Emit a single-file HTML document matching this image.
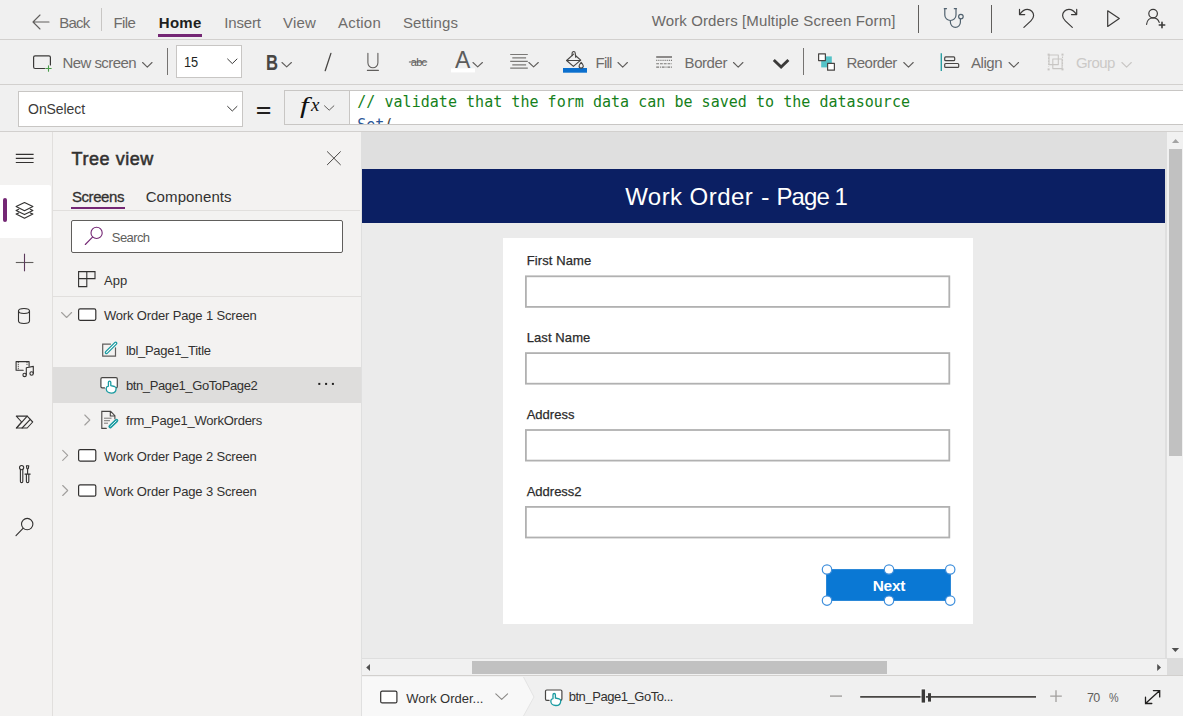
<!DOCTYPE html>
<html lang="en">
<head>
<meta charset="utf-8">
<title>Work Orders [Multiple Screen Form] - Power Apps</title>
<style>
*{box-sizing:border-box;margin:0;padding:0}
html,body{width:1183px;height:716px;overflow:hidden;background:#f3f2f1;font-family:"Liberation Sans",sans-serif}
#app{position:relative;width:1183px;height:716px;overflow:hidden;background:#f3f2f1}
.a{position:absolute}
.t{position:absolute;white-space:nowrap;display:block}
svg{position:absolute;overflow:visible}
.s{fill:none;stroke:#323130;stroke-width:1.1;stroke-linecap:round;stroke-linejoin:round}
.chev{fill:none;stroke:#605e5c;stroke-width:1.1;stroke-linecap:round;stroke-linejoin:round}
</style>
</head>
<body>
<div id="app">

<!-- ===== top menu bar ===== -->
<div class="a" style="left:0;top:0;width:1183px;height:40px;background:#f0f0f0;border-bottom:1px solid #d2d0ce"></div>
<!-- ===== ribbon ===== -->
<div class="a" style="left:0;top:40px;width:1183px;height:45px;background:#f0f0f0;border-bottom:1px solid #d2d0ce"></div>
<!-- ===== formula bar ===== -->
<div class="a" style="left:0;top:85px;width:1183px;height:47px;background:#f0f0f0;border-bottom:1px solid #d2d0ce"></div>

<!-- back arrow -->
<svg style="left:32px;top:14px" width="18" height="16" viewBox="0 0 18 16"><path class="s" style="stroke:#605e5c" d="M17 8H1.2M8 1L1 8l7 7"/></svg>
<div class="a" style="left:101px;top:8px;width:1px;height:23px;background:#c8c6c4"></div>
<!-- home underline -->
<div class="a" style="left:158px;top:34px;width:44px;height:3px;background:#742774"></div>

<!-- right cluster -->
<div class="a" style="left:918px;top:5px;width:1px;height:28px;background:#605e5c"></div>
<div class="a" style="left:991px;top:5px;width:1px;height:28px;background:#605e5c"></div>


<!-- font size dropdown -->
<div class="a" style="left:176px;top:45px;width:66px;height:33px;background:#fff;border:1px solid #c8c6c4"></div>
<!-- ribbon separators -->
<div class="a" style="left:167px;top:48px;width:1px;height:27px;background:#757371"></div>
<div class="a" style="left:803px;top:48px;width:1px;height:27px;background:#757371"></div>
<!-- property dropdown -->
<div class="a" style="left:18px;top:91px;width:225px;height:36px;background:#fff;border:1px solid #c8c6c4"></div>
<!-- fx button + formula box -->
<div class="a" style="left:284px;top:90px;width:899px;height:35px;background:#fff;border:1px solid #c8c6c4;border-right:0"></div>
<div class="a" style="left:285px;top:91px;width:65px;height:33px;background:#f0f0f0;border-right:1px solid #c8c6c4"></div>

<!--ICONS-->

<!-- ===== left rail ===== -->
<div class="a" style="left:0;top:132px;width:53px;height:584px;background:#f3f2f1;border-right:1px solid #e1dfdd"></div>
<div class="a" style="left:0;top:185px;width:51px;height:53px;background:#ffffff;border-radius:0 2px 2px 0"></div>
<div class="a" style="left:3px;top:198px;width:4px;height:24px;background:#742774;border-radius:2px"></div>

<!-- ===== tree panel ===== -->
<div class="a" style="left:53px;top:132px;width:308px;height:584px;background:#f3f2f1"></div>
<div class="a" style="left:71px;top:207px;width:54px;height:2px;background:#742774"></div>
<div class="a" style="left:53px;top:210px;width:307px;height:1px;background:#e1dfdd"></div>
<div class="a" style="left:71px;top:220px;width:272px;height:33px;background:#fff;border:1px solid #605e5c;border-radius:2px"></div>
<div class="a" style="left:53px;top:296px;width:308px;height:1px;background:#e1dfdd"></div>
<div class="a" style="left:53px;top:367px;width:308px;height:36px;background:#dedddc"></div>

<!-- ===== canvas ===== -->
<div class="a" style="left:361px;top:132px;width:806px;height:526px;background:#dfdfdf"></div>
<div class="a" style="left:362px;top:169px;width:803px;height:489px;background:#ebebeb"></div>
<div class="a" style="left:362px;top:169px;width:803px;height:54px;background:#0b1f63"></div>
<div class="a" style="left:503px;top:238px;width:470px;height:386px;background:#fff"></div>
<div class="a" style="left:826px;top:569px;width:125px;height:32px;background:#0a78d4;border:1px solid #2b88d8"></div>

<!-- scrollbars -->
<div class="a" style="left:1167px;top:132px;width:16px;height:526px;background:#f1f1f1"></div>
<div class="a" style="left:1169px;top:149px;width:13px;height:307px;background:#c1c1c1"></div>
<div class="a" style="left:361px;top:658px;width:806px;height:18px;background:#f1f1f1"></div>
<div class="a" style="left:472px;top:661px;width:415px;height:13px;background:#c1c1c1"></div>
<div class="a" style="left:1167px;top:658px;width:16px;height:18px;background:#dcdcdc"></div>

<div class="a" style="left:361px;top:658px;width:806px;height:1px;background:#dedede"></div>
<!-- bottom bar -->
<div class="a" style="left:361px;top:675px;width:822px;height:41px;background:#f0f0f0;border-top:1px solid #d2d0ce"></div>
<!-- breadcrumb first segment -->
<svg style="left:362px;top:677px" width="180" height="39" viewBox="0 0 180 39"><path d="M0 0h161.500l10.500 20l-10.500 19h-161.500z" fill="#f8f8f8"/><path d="M161.500 0l10.500 20l-10.500 19" fill="none" stroke="#e4e4e4" stroke-width="1"/></svg>

<div class="a" style="left:361px;top:658px;width:1px;height:58px;background:#e0e0e0"></div>
<svg style="left:0;top:0" width="1183" height="716" viewBox="0 0 1183 716" fill="none" stroke-linecap="round" stroke-linejoin="round">
<!-- ===== top bar right icons ===== -->
<g stroke="#3b3a39" stroke-width="1.2">
  <!-- stethoscope (app checker) -->
  <path d="M944.3 8.7h2.2M944.8 8.7v6.2a5.6 5.6 0 0 0 11.2 0V8.7M954.3 8.7h2.2M950.4 20.5v1.8a5 5 0 0 0 10 0v-3.2" stroke="#51626f"/>
  <circle cx="960.9" cy="16.6" r="2.3" stroke="#51626f"/>
  <!-- undo -->
  <path d="M1019.5 9.4v5.2h5.2M1019.7 14.4c2.2-3.2 4.6-5 7.6-5c3.6 0 6.3 2.8 6.3 6.2c0 2.3-1 3.7-2.7 5.3l-7 6.5"/>
  <!-- redo -->
  <path d="M1076.7 9.4v5.2h-5.2M1076.5 14.4c-2.2-3.2-4.6-5-7.6-5c-3.6 0-6.3 2.8-6.3 6.2c0 2.3 1 3.7 2.7 5.3l7 6.5"/>
  <!-- play -->
  <path d="M1107.7 10.8v15.6l11.6-7.8z"/>
  <!-- user + -->
  <circle cx="1153.1" cy="13.6" r="4.3"/>
  <path d="M1146.6 24.3c.3-3.9 3-6.4 6.5-6.4c2.9 0 5.200 1.700 6.100 4.500"/>
  <path d="M1162 22.300v5.400M1159.300 25h5.400" stroke-width="1.600"/>
</g>

<!-- ===== ribbon icons ===== -->
<!-- new screen -->
<path d="M44.600 68.500h-9.500a1.500 1.500 0 0 1-1.500-1.500v-9.700a1.500 1.500 0 0 1 1.500-1.500h13.800a1.500 1.500 0 0 1 1.500 1.500v7.700" stroke="#3b3a39" stroke-width="1.200"/>
<path d="M48.500 65.800v5.400M45.800 68.500h5.400" stroke="#4a9d4a" stroke-width="1.100"/>
<!-- chevrons (small, gray) -->
<g stroke="#605e5c" stroke-width="1.100">
  <path d="M142.600 62.500l4.700 4.600l4.700-4.600"/>
  <path d="M227.600 59l4.700 4.600l4.700-4.600" stroke="#3b3a39" stroke-width="1"/>
  <path d="M282 62.500l4.700 4.400l4.700-4.400"/>
  <path d="M473 62.500l4.700 4.400l4.700-4.400"/>
  <path d="M528.900 62.500l4.700 4.400l4.700-4.400"/>
  <path d="M618 62.500l4.700 4.600l4.700-4.600"/>
  <path d="M733.500 62.500l4.700 4.600l4.700-4.600"/>
  <path d="M903.800 62.500l4.700 4.600l4.700-4.600"/>
  <path d="M1009.100 62.500l4.700 4.600l4.700-4.600"/>
  <path d="M1121.900 62.500l4.700 4.600l4.700-4.600" stroke="#c8c6c4"/>
  <path d="M227.600 106.400l4.700 4.600l4.700-4.600" stroke="#3b3a39" stroke-width="1"/>
  <path d="M324.500 105.800l4.700 4.400l4.700-4.400" stroke="#605e5c" stroke-width="1"/>
</g>
<!-- italic -->
<path d="M330.900 53.400l-5.700 17.300" stroke="#484644" stroke-width="1.300"/>
<!-- underline -->
<path d="M367.900 53.300v9.500a5 5 0 0 0 10 0v-9.500M367.400 70.400h11" stroke="#605e5c" stroke-width="1.100"/>
<!-- strikethrough line -->
<path d="M409.300 62h17.600" stroke="#605e5c" stroke-width="1"/>
<!-- font colour bar -->
<rect x="451" y="68.400" width="24" height="4" fill="#ffffff"/>
<!-- text align -->
<path d="M510.200 54.500h17.600M512.300 57.900h13.800M510.200 61.400h17.600M512.300 64.800h13.800M510.200 68.200h17.600" stroke="#7a7876" stroke-width="1.200" stroke-linecap="butt"/>
<!-- fill bucket -->
<rect x="563" y="68" width="24" height="4.700" fill="#0b6fce"/>
<g stroke="#484644" stroke-width="1.150">
  <path d="M572.100 55.600v-2.400a1.500 1.500 0 0 1 3.100-.2l.5 4.300"/>
  <path d="M573.600 54.100l-7 6.400l6.800 5.900l7.300-6.300l-5-4.300"/>
  <path d="M566.900 60.500h13.500"/>
  <path d="M581.200 62.400c1.400 1.700 2.100 2.800 2.100 3.600a2.100 2.100 0 0 1-4.200 0c0-.8.700-1.900 2.100-3.600z"/>
</g>
<!-- border style -->
<g stroke="#7a7876" stroke-linecap="butt">
  <path d="M656.200 57h15.800" stroke-width="1.700"/>
  <path d="M656.200 60.400h15.800" stroke-width="1.100" stroke-dasharray="1.100 1"/>
  <path d="M656.200 63.800h15.800" stroke-width="1.100" stroke-dasharray="2.800 1"/>
  <path d="M656.200 67.100h15.800" stroke-width="1.300" stroke-dasharray="2.800 .9 1 .9"/>
</g>
<!-- bold expand chevron -->
<path d="M773.800 60l7.300 7l7.300-7" stroke="#3b3a39" stroke-width="2.900" stroke-linecap="butt" stroke-linejoin="miter"/>
<!-- reorder -->
<rect x="821.200" y="56.400" width="10.600" height="11" fill="#54c3c8"/>
<rect x="818.600" y="53.800" width="6.800" height="6.800" fill="#fff" stroke="#484644" stroke-width="1.200"/>
<rect x="827.600" y="63.400" width="6.800" height="6.800" fill="#fff" stroke="#484644" stroke-width="1.200"/>
<!-- align -->
<path d="M941.300 53.300v17.600" stroke="#2b9fa3" stroke-width="1.400" stroke-linecap="butt"/>
<rect x="944.700" y="56.900" width="10" height="3.800" rx="1" stroke="#484644" stroke-width="1.200"/>
<rect x="944.700" y="63.500" width="14" height="3.900" rx="1" stroke="#484644" stroke-width="1.200"/>
<!-- group (disabled) -->
<g stroke="#c8c6c4" stroke-width="1.100" stroke-linecap="butt">
  <rect x="1049" y="55" width="9.300" height="9.600"/>
  <rect x="1052.800" y="59" width="9.300" height="9.600"/>
  <path d="M1048.600 57.500v9.600M1062.500 56.500v9.600" stroke-dasharray="1.500 1.500"/>
</g>
<g fill="#c8c6c4"><rect x="1047.600" y="53.600" width="2" height="2"/><rect x="1061.500" y="53.600" width="2" height="2"/><rect x="1047.600" y="68.400" width="2" height="2"/><rect x="1061.500" y="68.400" width="2" height="2"/></g>

<!-- ===== left rail ===== -->
<g stroke="#323130" stroke-width="1.100">
  <path d="M15.800 154.400h17.800M15.800 158.400h17.800M15.800 162.500h17.800" stroke-linecap="butt"/>
  <!-- layers -->
  <path d="M24.500 202.500l8.400 4.100l-8.400 4.100l-8.400-4.100z"/>
  <path d="M18.700 209.300l-2.600 1.200l8.400 4.100l8.400-4.100l-2.600-1.200"/>
  <path d="M18.700 212.900l-2.600 1.200l8.400 4.100l8.400-4.100l-2.600-1.200"/>
  <!-- plus -->
  <path d="M15.800 262.500h17.600" stroke="#605e5c" stroke-linecap="butt"/>
  <path d="M24.500 253.700v17.600" stroke="#5c3a5c" stroke-linecap="butt"/>
  <!-- database -->
  <ellipse cx="24" cy="311" rx="5.500" ry="2.500"/>
  <path d="M18.500 311v10c0 1.400 2.500 2.500 5.500 2.500s5.500-1.100 5.500-2.500v-10"/>
  <!-- media -->
  <path d="M23.200 370.200h-7.100v-8.600h13v4.600"/>
  <path d="M18.300 361.800v8.400M27 361.800v4" stroke-dasharray="1 1" stroke-width="1" stroke-linecap="butt"/>
  <path d="M26.300 374.700v-7l7-1.300v6.900"/>
  <circle cx="24.600" cy="374.900" r="1.700"/>
  <circle cx="31.600" cy="373.500" r="1.700"/>
  <!-- power automate -->
  <path d="M16.300 416.100h10.900l5.500 5.900l-5.500 6h-10.900l5.300-6z"/>
  <path d="M27.200 416.100l-10.500 11.800M30.300 419.400l-8.200 8.600"/>
  <!-- tools -->
  <circle cx="21.600" cy="467.600" r="2.100"/>
  <path d="M20.400 469.400v12a1.200 1.200 0 0 0 2.400 0v-12"/>
  <path d="M26.400 465.700h2.400l-.5 3h-1.400zM27.600 468.700v5.300M25 474.100h5.200M26.400 474.100v7.300a1.200 1.200 0 0 0 2.400 0v-7.300"/>
  <!-- search -->
  <circle cx="27.200" cy="524.100" r="5.700"/>
  <path d="M23 528.300l-7 7.400"/>
</g>

<!-- ===== tree panel ===== -->
<path d="M327.400 151.700l13 13M340.400 151.700l-13 13" stroke="#484644" stroke-width="1"/>
<!-- search icon -->
<circle cx="96.600" cy="232.900" r="5.600" stroke="#742774" stroke-width="1.100"/>
<path d="M92.500 237.100l-7.200 7.400" stroke="#742774" stroke-width="1.100"/>
<!-- app icon -->
<path d="M78.600 271.600h16.400v7h-8.200v8h-8.200zM86.800 271.600v7M78.600 278.600h8.200" stroke="#323130" stroke-width="1.100" stroke-linejoin="miter"/>
<!-- tree chevrons -->
<g stroke="#a19f9d" stroke-width="1.100">
  <path d="M61.600 312.500l5 5l5-5"/>
  <path d="M84.800 415l5 5l-5 5"/>
  <path d="M62.700 450.300l5 5l-5 5"/>
  <path d="M62.700 485.500l5 5l-5 5"/>
</g>
<!-- screen icons -->
<g stroke="#323130" stroke-width="1.200" fill="#fff">
  <rect x="78.600" y="308.900" width="17.200" height="11.400" rx="1.500"/>
  <rect x="78.600" y="449.700" width="17.200" height="11.400" rx="1.500"/>
  <rect x="78.600" y="484.800" width="17.200" height="11.400" rx="1.500"/>
  <rect x="380.700" y="691.100" width="16.200" height="11.800" rx="1.500"/>
</g>
<!-- label icon -->
<path d="M110.500 344.100h-7.800v12h12.800v-8.300" stroke="#605e5c" stroke-width="1.200" stroke-linejoin="miter"/>
<path d="M106.400 352.500l9.300-9.200" stroke="#1a9ba1" stroke-width="3.400"/>
<path d="M106.600 352.300l9-8.900" stroke="#fff" stroke-width="1.100"/>
<!-- button icon (tree) -->
<g>
  <path d="M104.500 387.900h-2.300a1.300 1.300 0 0 1-1.300-1.300v-7.700a1.300 1.300 0 0 1 1.300-1.300h13.800a1.300 1.300 0 0 1 1.300 1.300v7.700a1.300 1.300 0 0 1-1.300 1.300h-.5" stroke="#484644" stroke-width="1.200" fill="#fff"/>
  <path d="M108.400 386.200v-3.900a1.200 1.200 0 0 1 2.400 0v3.300l3.700.9c1 .3 1.600 1 1.600 2c0 2.600-1.900 4.600-4.900 4.600c-2.900 0-5-2-5-4.500c0-1.300.8-2.100 2.200-2.400z" stroke="#1a9ba1" stroke-width="1.300" fill="#fff"/>
</g>
<!-- form icon -->
<path d="M106.300 428.400h-4.500v-17h8.800l4.300 4.300v3M110.300 411.600v4.400h4.400" stroke="#484644" stroke-width="1.100" stroke-linejoin="miter"/>
<path d="M104 418.200h7.500M104 420.700h6M104 423.200h4" stroke="#7a7876" stroke-width="1" stroke-linecap="butt"/>
<path d="M110.200 426.600l6.300-6" stroke="#1a9ba1" stroke-width="3.600"/>
<path d="M110.600 426.200l5.600-5.300" stroke="#d9f2f3" stroke-width="1"/>
<!-- ellipsis -->
<g fill="#201f1e"><rect x="318.300" y="382.900" width="2" height="2"/><rect x="325.100" y="382.900" width="2" height="2"/><rect x="331.900" y="382.900" width="2" height="2"/></g>

<!-- ===== form inputs ===== -->
<rect x="525.900" y="276.3" width="423.400" height="30.600" fill="#fff" stroke="#b1b1b1" stroke-width="1.800" stroke-linejoin="miter"/>
<rect x="525.900" y="353.1" width="423.400" height="30.600" fill="#fff" stroke="#b1b1b1" stroke-width="1.800" stroke-linejoin="miter"/>
<rect x="525.900" y="430.0" width="423.400" height="30.600" fill="#fff" stroke="#b1b1b1" stroke-width="1.800" stroke-linejoin="miter"/>
<rect x="525.900" y="506.9" width="423.400" height="30.600" fill="#fff" stroke="#b1b1b1" stroke-width="1.800" stroke-linejoin="miter"/>
<!-- ===== selection handles ===== -->
<g fill="#fff" stroke="#3f8fdc" stroke-width="1.200">
  <circle cx="827" cy="569.500" r="4.700"/><circle cx="889" cy="569.500" r="4.700"/><circle cx="950.200" cy="569.500" r="4.700"/>
  <circle cx="827" cy="600.600" r="4.700"/><circle cx="889" cy="600.600" r="4.700"/><circle cx="950.200" cy="600.600" r="4.700"/>
</g>

<!-- ===== scrollbar arrows ===== -->
<path d="M1172 143l3.600-3.900l3.600 3.900z" fill="#a3a3a3" stroke="none"/>
<path d="M1171.700 648.100h7.400l-3.700 4z" fill="#505050" stroke="none"/>
<path d="M370 664v6.900l-3.800-3.450z" fill="#505050" stroke="none"/>
<path d="M1157.200 664v6.900l3.800-3.450z" fill="#505050" stroke="none"/>

<!-- ===== bottom bar ===== -->
<path d="M495.800 693.800l5.900 5.600l5.900-5.600" stroke="#8a8886" stroke-width="1.100"/>
<g transform="translate(444.600 312.400)">
  <path d="M104.500 387.900h-2.300a1.300 1.300 0 0 1-1.300-1.300v-7.700a1.300 1.300 0 0 1 1.300-1.300h13.800a1.300 1.300 0 0 1 1.300 1.300v7.700a1.300 1.300 0 0 1-1.300 1.300h-.5" stroke="#484644" stroke-width="1.200" fill="#fff"/>
  <path d="M108.400 386.200v-3.900a1.200 1.200 0 0 1 2.400 0v3.300l3.700.9c1 .3 1.600 1 1.600 2c0 2.600-1.900 4.600-4.900 4.600c-2.900 0-5-2-5-4.500c0-1.300.8-2.100 2.200-2.400z" stroke="#1a9ba1" stroke-width="1.300" fill="#fff"/>
</g>
<path d="M830 696.100h12" stroke="#a19f9d" stroke-width="1.400" stroke-linecap="butt"/>
<path d="M1050.200 696.100h11.600M1056 690.200v11.800" stroke="#a19f9d" stroke-width="1.300" stroke-linecap="butt"/>
<path d="M860.200 696.800h175.800" stroke="#484644" stroke-width="1.800" stroke-linecap="butt"/>
<rect x="921.400" y="689" width="4.100" height="14" fill="#3b3a39" stroke="#fff" stroke-width=".8"/>
<rect x="928" y="693.200" width="3" height="8.400" fill="#3b3a39"/>
<path d="M1153.400 690.600h6.300v6.300M1159.500 690.800l-14 12.700M1145.500 697.200v6.300h6.300" stroke="#201f1e" stroke-width="1.300" stroke-linejoin="miter"/>
</svg>

<div class="a" style="left:351px;top:91px;width:832px;height:33px;overflow:hidden"><span class="a" style="white-space:nowrap;left:6.300px;top:24.300px;height:21px;line-height:21px;font-size:15px;font-family:'DejaVu Sans Mono','Liberation Mono',monospace;color:#2b5797">Set<span style="color:#484644">(</span></span></div>
<span class="t" style="left:59.2px;top:12.0px;height:21px;line-height:21px;font-size:15px;font-weight:400;color:#6e6c6a;font-family:'Liberation Sans', sans-serif;letter-spacing:-0.790px;">Back</span>
<span class="t" style="left:113.5px;top:12.0px;height:21px;line-height:21px;font-size:15px;font-weight:400;color:#6e6c6a;font-family:'Liberation Sans', sans-serif;letter-spacing:-0.593px;">File</span>
<span class="t" style="left:158.8px;top:12.0px;height:21px;line-height:21px;font-size:15px;font-weight:700;color:#201f1e;font-family:'Liberation Sans', sans-serif;letter-spacing:0.278px;">Home</span>
<span class="t" style="left:224.2px;top:12.0px;height:21px;line-height:21px;font-size:15px;font-weight:400;color:#6e6c6a;font-family:'Liberation Sans', sans-serif;letter-spacing:-0.153px;">Insert</span>
<span class="t" style="left:283px;top:12.0px;height:21px;line-height:21px;font-size:15px;font-weight:400;color:#6e6c6a;font-family:'Liberation Sans', sans-serif;letter-spacing:0.188px;">View</span>
<span class="t" style="left:338px;top:12.0px;height:21px;line-height:21px;font-size:15px;font-weight:400;color:#6e6c6a;font-family:'Liberation Sans', sans-serif;letter-spacing:0.216px;">Action</span>
<span class="t" style="left:403px;top:12.0px;height:21px;line-height:21px;font-size:15px;font-weight:400;color:#6e6c6a;font-family:'Liberation Sans', sans-serif;letter-spacing:0.100px;">Settings</span>
<span class="t" style="left:651.7px;top:10.3px;height:21px;line-height:21px;font-size:15px;font-weight:400;color:#6b6967;font-family:'Liberation Sans', sans-serif;letter-spacing:0.121px;">Work Orders [Multiple Screen Form]</span>
<span class="t" style="left:62.5px;top:52.3px;height:21px;line-height:21px;font-size:15px;font-weight:400;color:#6e6c6a;font-family:'Liberation Sans', sans-serif;letter-spacing:-0.570px;">New screen</span>
<span class="t" style="left:183.6px;top:51.1px;height:21px;line-height:21px;font-size:15px;font-weight:400;color:#201f1e;font-family:'Liberation Sans', sans-serif;letter-spacing:0.000px;transform:scaleX(0.8509);transform-origin:0 50%;">15</span>
<span class="t" style="left:595.6px;top:52.3px;height:21px;line-height:21px;font-size:15px;font-weight:400;color:#6e6c6a;font-family:'Liberation Sans', sans-serif;letter-spacing:-0.818px;">Fill</span>
<span class="t" style="left:684.6px;top:52.3px;height:21px;line-height:21px;font-size:15px;font-weight:400;color:#6e6c6a;font-family:'Liberation Sans', sans-serif;letter-spacing:-0.439px;">Border</span>
<span class="t" style="left:846.6px;top:52.3px;height:21px;line-height:21px;font-size:15px;font-weight:400;color:#6e6c6a;font-family:'Liberation Sans', sans-serif;letter-spacing:-0.572px;">Reorder</span>
<span class="t" style="left:971px;top:52.3px;height:21px;line-height:21px;font-size:15px;font-weight:400;color:#6e6c6a;font-family:'Liberation Sans', sans-serif;letter-spacing:-0.432px;">Align</span>
<span class="t" style="left:1075.9px;top:52.3px;height:21px;line-height:21px;font-size:15px;font-weight:400;color:#cbc9c7;font-family:'Liberation Sans', sans-serif;letter-spacing:-0.561px;">Group</span>
<span class="t" style="left:28.1px;top:98.6px;height:20px;line-height:20px;font-size:14px;font-weight:400;color:#3b3a39;font-family:'Liberation Sans', sans-serif;letter-spacing:-0.087px;">OnSelect</span>
<span class="t" style="left:357.3px;top:91.5px;height:21px;line-height:21px;font-size:15px;font-weight:400;color:#15801a;font-family:'DejaVu Sans Mono', 'Liberation Mono', monospace;letter-spacing:0.030px;">// validate that the form data can be saved to the datasource</span>
<span class="t" style="left:71.5px;top:147.0px;height:25px;line-height:25px;font-size:18px;font-weight:400;color:#323130;font-family:'Liberation Sans', sans-serif;letter-spacing:0.560px;-webkit-text-stroke:0.55px #323130;">Tree view</span>
<span class="t" style="left:71.9px;top:186.4px;height:21px;line-height:21px;font-size:15px;font-weight:400;color:#323130;font-family:'Liberation Sans', sans-serif;letter-spacing:-0.404px;-webkit-text-stroke:0.3px #323130;">Screens</span>
<span class="t" style="left:145.7px;top:186.4px;height:21px;line-height:21px;font-size:15px;font-weight:400;color:#323130;font-family:'Liberation Sans', sans-serif;letter-spacing:0.094px;">Components</span>
<span class="t" style="left:111.8px;top:228.5px;height:18px;line-height:18px;font-size:13px;font-weight:400;color:#605e5c;font-family:'Liberation Sans', sans-serif;letter-spacing:-0.584px;">Search</span>
<span class="t" style="left:104px;top:271.6px;height:18px;line-height:18px;font-size:13px;font-weight:400;color:#323130;font-family:'Liberation Sans', sans-serif;letter-spacing:0.053px;">App</span>
<span class="t" style="left:103.9px;top:306.7px;height:18px;line-height:18px;font-size:13px;font-weight:400;color:#323130;font-family:'Liberation Sans', sans-serif;letter-spacing:-0.157px;">Work Order Page 1 Screen</span>
<span class="t" style="left:125.9px;top:341.8px;height:18px;line-height:18px;font-size:13px;font-weight:400;color:#323130;font-family:'Liberation Sans', sans-serif;letter-spacing:-0.289px;">lbl_Page1_Title</span>
<span class="t" style="left:125.9px;top:376.7px;height:18px;line-height:18px;font-size:13px;font-weight:400;color:#323130;font-family:'Liberation Sans', sans-serif;letter-spacing:-0.384px;">btn_Page1_GoToPage2</span>
<span class="t" style="left:126px;top:411.8px;height:18px;line-height:18px;font-size:13px;font-weight:400;color:#323130;font-family:'Liberation Sans', sans-serif;letter-spacing:-0.233px;">frm_Page1_WorkOrders</span>
<span class="t" style="left:103.9px;top:448.0px;height:18px;line-height:18px;font-size:13px;font-weight:400;color:#323130;font-family:'Liberation Sans', sans-serif;letter-spacing:-0.157px;">Work Order Page 2 Screen</span>
<span class="t" style="left:103.9px;top:483.2px;height:18px;line-height:18px;font-size:13px;font-weight:400;color:#323130;font-family:'Liberation Sans', sans-serif;letter-spacing:-0.157px;">Work Order Page 3 Screen</span>
<span class="t" style="left:625.2px;top:180.2px;height:34px;line-height:34px;font-size:24px;font-weight:400;color:#ffffff;font-family:'Liberation Sans', sans-serif;letter-spacing:0.442px;">Work Order</span>
<span class="t" style="left:761px;top:180.2px;height:34px;line-height:34px;font-size:24px;font-weight:400;color:#ffffff;font-family:'Liberation Sans', sans-serif;letter-spacing:0.000px;transform:scaleX(1.0625);transform-origin:0 50%;">-</span>
<span class="t" style="left:776.5px;top:180.2px;height:34px;line-height:34px;font-size:24px;font-weight:400;color:#ffffff;font-family:'Liberation Sans', sans-serif;letter-spacing:-0.930px;">Page 1</span>
<span class="t" style="left:526.7px;top:251.6px;height:18px;line-height:18px;font-size:13px;font-weight:400;color:#2b2b2b;font-family:'Liberation Sans', sans-serif;letter-spacing:0.114px;-webkit-text-stroke:0.25px #2b2b2b;">First Name</span>
<span class="t" style="left:526.7px;top:328.6px;height:18px;line-height:18px;font-size:13px;font-weight:400;color:#2b2b2b;font-family:'Liberation Sans', sans-serif;letter-spacing:0.092px;-webkit-text-stroke:0.25px #2b2b2b;">Last Name</span>
<span class="t" style="left:526.7px;top:405.6px;height:18px;line-height:18px;font-size:13px;font-weight:400;color:#2b2b2b;font-family:'Liberation Sans', sans-serif;letter-spacing:-0.000px;-webkit-text-stroke:0.25px #2b2b2b;">Address</span>
<span class="t" style="left:526.7px;top:482.6px;height:18px;line-height:18px;font-size:13px;font-weight:400;color:#2b2b2b;font-family:'Liberation Sans', sans-serif;letter-spacing:-0.003px;-webkit-text-stroke:0.25px #2b2b2b;">Address2</span>
<span class="t" style="left:872.7px;top:574.7px;height:22px;line-height:22px;font-size:15.4px;font-weight:700;color:#fff;font-family:'Liberation Sans', sans-serif;letter-spacing:-0.215px;">Next</span>
<span class="t" style="left:406.3px;top:689.8px;height:18px;line-height:18px;font-size:13px;font-weight:400;color:#323130;font-family:'Liberation Sans', sans-serif;letter-spacing:0.003px;">Work Order...</span>
<span class="t" style="left:568.7px;top:688.2px;height:18px;line-height:18px;font-size:13px;font-weight:400;color:#323130;font-family:'Liberation Sans', sans-serif;letter-spacing:-0.455px;">btn_Page1_GoTo...</span>
<span class="t" style="left:1086.9px;top:688.7px;height:18px;line-height:18px;font-size:12.5px;font-weight:400;color:#605e5c;font-family:'Liberation Sans', sans-serif;letter-spacing:-0.703px;">70</span>
<span class="t" style="left:1108.7px;top:688.7px;height:18px;line-height:18px;font-size:12.5px;font-weight:400;color:#605e5c;font-family:'Liberation Sans', sans-serif;letter-spacing:0.000px;transform:scaleX(0.8629);transform-origin:0 50%;">%</span>
<span class="t" style="left:265.6px;top:46.7px;height:31px;line-height:31px;font-size:22px;font-weight:700;color:#484644;font-family:'Liberation Sans', sans-serif;letter-spacing:0.000px;transform:scaleX(0.7552);transform-origin:0 50%;">B</span>
<span class="t" style="left:410.8px;top:54.8px;height:15px;line-height:15px;font-size:11px;font-weight:400;color:#605e5c;font-family:'Liberation Sans', sans-serif;letter-spacing:-0.750px;">abc</span>
<span class="t" style="left:455.3px;top:44.2px;height:33px;line-height:33px;font-size:23.6px;font-weight:400;color:#5c5c5c;font-family:'Liberation Sans', sans-serif;letter-spacing:0.000px;transform:scaleX(0.9714);transform-origin:0 50%;">A</span>
<span class="t" style="left:256.3px;top:97.1px;height:27px;line-height:27px;font-size:19px;font-weight:700;color:#201f1e;font-family:'Liberation Sans', sans-serif;letter-spacing:0.000px;transform:scaleX(1.3682);transform-origin:0 50%;">=</span>
<span class="t" style="left:300.2px;top:90.2px;height:32px;line-height:32px;font-size:23px;font-weight:400;color:#111;font-family:'Liberation Serif', serif;letter-spacing:0.000px;font-style:italic;transform:scaleX(1.35);transform-origin:0 50%;">f</span>
<span class="t" style="left:310.8px;top:93.2px;height:25px;line-height:25px;font-size:18px;font-weight:400;color:#111;font-family:'Liberation Serif', serif;letter-spacing:0.000px;font-style:italic;transform:scaleX(1.05);transform-origin:0 50%;">x</span>
</div>
</body>
</html>
